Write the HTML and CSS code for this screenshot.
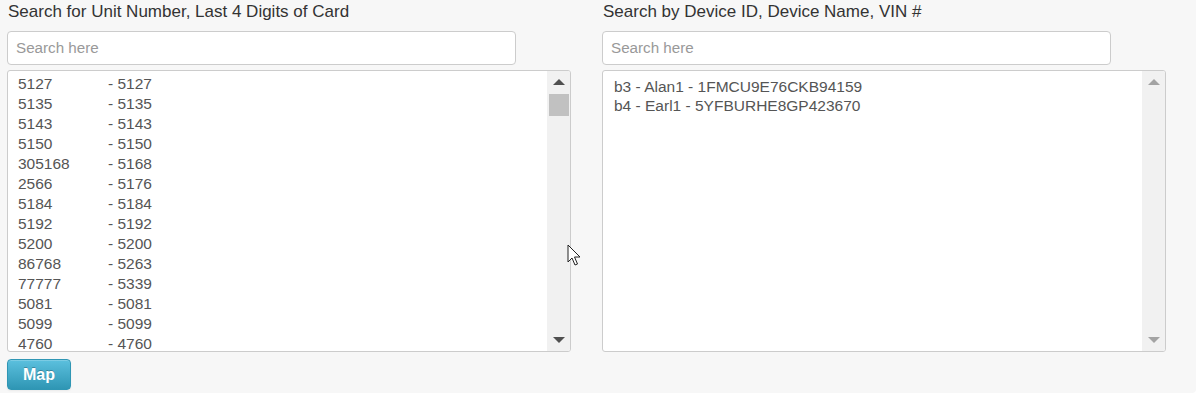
FILE: index.html
```html
<!DOCTYPE html>
<html>
<head>
<meta charset="utf-8">
<link rel="stylesheet" href="styles.css">
</head>
<body>
<div class="page">
  <div class="columns">
    <div class="col">
      <label class="label">Search for Unit Number, Last 4 Digits of Card</label>
      <div class="input">Search here</div>
      <div class="listbox">
        <div class="items">
          <div class="row"><span class="c1">5127</span><span>- 5127</span></div>
          <div class="row"><span class="c1">5135</span><span>- 5135</span></div>
          <div class="row"><span class="c1">5143</span><span>- 5143</span></div>
          <div class="row"><span class="c1">5150</span><span>- 5150</span></div>
          <div class="row"><span class="c1">305168</span><span>- 5168</span></div>
          <div class="row"><span class="c1">2566</span><span>- 5176</span></div>
          <div class="row"><span class="c1">5184</span><span>- 5184</span></div>
          <div class="row"><span class="c1">5192</span><span>- 5192</span></div>
          <div class="row"><span class="c1">5200</span><span>- 5200</span></div>
          <div class="row"><span class="c1">86768</span><span>- 5263</span></div>
          <div class="row"><span class="c1">77777</span><span>- 5339</span></div>
          <div class="row"><span class="c1">5081</span><span>- 5081</span></div>
          <div class="row"><span class="c1">5099</span><span>- 5099</span></div>
          <div class="row"><span class="c1">4760</span><span>- 4760</span></div>
        </div>
        <div class="scrollbar">
          <div class="arrow up"></div>
          <div class="track"><div class="thumb"></div></div>
          <div class="arrow down"></div>
        </div>
      </div>
    </div>
    <div class="col">
      <label class="label">Search by Device ID, Device Name, VIN #</label>
      <div class="input">Search here</div>
      <div class="listbox">
        <div class="items items2">
          <div class="row2">b3 - Alan1 - 1FMCU9E76CKB94159</div>
          <div class="row2">b4 - Earl1 - 5YFBURHE8GP423670</div>
        </div>
        <div class="scrollbar disabled">
          <div class="arrow up"></div>
          <div class="track"></div>
          <div class="arrow down"></div>
        </div>
      </div>
    </div>
  </div>
  <button class="btn">Map</button>
  <svg class="cursor" width="14" height="24" viewBox="0 0 14 24">
    <path d="M1 1 L1 18 L5 14 L8 21 L10.5 20 L7.5 13 L13 13 Z" fill="#fff" stroke="#222" stroke-width="1" stroke-linejoin="round"/>
  </svg>
</div>
</body>
</html>
```

FILE: styles.css
```css
html, body {
  margin: 0;
  padding: 0;
  background: #ffffff;
}
.page {
  position: relative;
  width: 1196px;
  height: 393px;
  background: #f7f7f7;
  box-sizing: border-box;
  padding: 3px 0 0 7px;
  font-family: "Liberation Sans", Arial, sans-serif;
  color: #333;
  border-bottom-right-radius: 4px;
}
.columns {
  display: flex;
  gap: 31px;
}
.col {
  display: flex;
  flex-direction: column;
  width: 564px;
}
.label {
  display: block;
  font-size: 17px;
  line-height: 18px;
  height: 18px;
  padding-left: 1px;
  color: #333;
  white-space: nowrap;
}
.input {
  margin-top: 10px;
  width: 509px;
  height: 34px;
  box-sizing: border-box;
  border: 1px solid #ccc;
  border-radius: 4px;
  background: #fff;
  font-size: 15.2px;
  line-height: 31px;
  padding-left: 8px;
  color: #999;
}
.listbox {
  margin-top: 5px;
  height: 282px;
  box-sizing: border-box;
  border: 1px solid #ccc;
  border-radius: 3px;
  background: #fff;
  display: flex;
  overflow: hidden;
}
.items {
  flex: 1;
  padding: 3px 0 0 10px;
  font-size: 15.5px;
  color: #555;
  overflow: hidden;
}
.row {
  display: flex;
  height: 20px;
  line-height: 20px;
}
.c1 {
  width: 90px;
}
.items2 {
  padding: 6px 0 0 11px;
}
.row2 {
  height: 19px;
  line-height: 19px;
}
.scrollbar {
  width: 22px;
  background: #f1f1f1;
  display: flex;
  flex-direction: column;
  border-left: 1px solid #f1f1f1;
}
.arrow {
  height: 22px;
  display: flex;
  align-items: center;
  justify-content: center;
}
.arrow::before {
  content: "";
  width: 0;
  height: 0;
  border-left: 6px solid transparent;
  border-right: 6px solid transparent;
}
.up::before {
  border-bottom: 6px solid #505050;
}
.down::before {
  border-top: 6px solid #505050;
}
.disabled .up::before {
  border-bottom-color: #a3a3a3;
}
.disabled .down::before {
  border-top-color: #a3a3a3;
}
.track {
  flex: 1;
  padding: 1px 1px 0 1px;
}
.thumb {
  height: 22px;
  background: #c1c1c1;
}
.btn {
  margin-top: 7px;
  width: 64px;
  height: 31px;
  border: 1px solid #2f96b4;
  border-radius: 4px;
  background: linear-gradient(#5bc0de, #2f96b4);
  color: #fff;
  font-family: "Liberation Sans", Arial, sans-serif;
  font-weight: bold;
  font-size: 16px;
  padding: 0;
  text-shadow: 0 -1px 0 rgba(0, 0, 0, 0.25);
  box-shadow: inset 0 1px 0 rgba(255,255,255,.2), 0 1px 2px rgba(0,0,0,.05);
}
.cursor {
  position: absolute;
  left: 567px;
  top: 244px;
}
```
